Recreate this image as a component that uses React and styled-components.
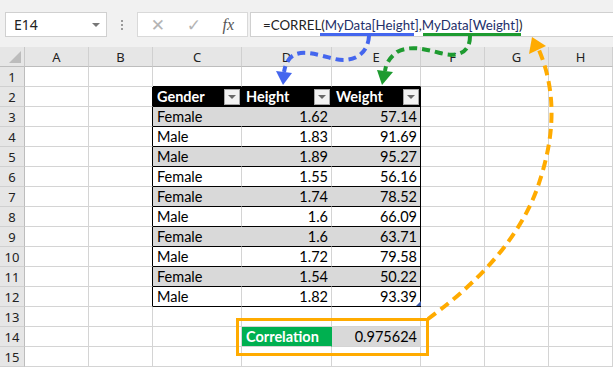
import React from "react";
import styled, { createGlobalStyle } from "styled-components";

const GlobalStyle = createGlobalStyle`
  html, body { margin: 0; padding: 0; background: #ffffff; overflow: hidden; }
  * { box-sizing: border-box; }
`;

const UI_FONT = `"Noto Sans", "Open Sans", "DejaVu Sans", sans-serif`;
const CELL_FONT = `Lato, "Liberation Sans", sans-serif`;

const Wrapper = styled.div`
  position: relative;
  width: 613px;
  height: 367px;
  overflow: hidden;
  background: #ffffff;
`;

const TopBar = styled.div`
  display: flex;
  align-items: flex-start;
  height: 47px;
  padding: 12px 0 0 5px;
  background: #f1f1f1;
`;

const NameBox = styled.div`
  display: flex;
  align-items: center;
  justify-content: space-between;
  width: 102px;
  height: 25px;
  padding: 0 6px 0 8px;
  background: #ffffff;
  border: 1px solid #d0d0d0;
  font-family: ${UI_FONT};
  font-size: 14px;
  color: #222;
`;

const Caret = styled.span`
  width: 0;
  height: 0;
  border-left: 4px solid transparent;
  border-right: 4px solid transparent;
  border-top: 4px solid #777;
`;

const Grip = styled.div`
  display: flex;
  flex-direction: column;
  gap: 2px;
  width: 30px;
  align-items: center;
  padding-top: 8px;
  span {
    width: 2px;
    height: 2px;
    background: #9a9a9a;
  }
`;

const FnBox = styled.div`
  display: flex;
  align-items: center;
  justify-content: space-around;
  width: 111px;
  height: 25px;
  background: #ffffff;
  border: 1px solid #d9d9d9;
  margin-right: 2px;
  font-family: ${UI_FONT};
  padding: 0 2px;
`;

const FnIcon = styled.span`
  color: ${(p) => p.$color};
  font-size: ${(p) => p.$size || 16}px;
  font-style: ${(p) => (p.$italic ? "italic" : "normal")};
  font-family: ${(p) => (p.$serif ? `"Liberation Serif", serif` : UI_FONT)};
  line-height: 1;
`;

const FormulaBox = styled.div`
  flex: 1;
  height: 25px;
  display: flex;
  align-items: center;
  padding-left: 12px;
  background: #ffffff;
  border: 1px solid #d0d0d0;
  border-right: none;
  font-family: ${CELL_FONT};
  font-size: 13.3px;
  color: #222;
  white-space: nowrap;
`;

const Ref = styled.span`
  color: ${(p) => p.$color};
`;

const Sheet = styled.div`
  display: grid;
  grid-template-columns: 25px 64px 64px 89px 90px 89px 64px 64px 64px;
  grid-auto-rows: 20px;
`;

const Corner = styled.div`
  background: #e6e6e6;
  border-right: 1px solid #c8c8c8;
  border-bottom: 1px solid #bdbdbd;
  display: flex;
  align-items: flex-end;
  justify-content: flex-end;
  padding: 0 3px 3px 0;
`;

const CornerTri = styled.span`
  width: 0;
  height: 0;
  border-left: 12px solid transparent;
  border-bottom: 12px solid #bcbcbc;
`;

const ColHead = styled.div`
  background: #e6e6e6;
  border-right: 1px solid #d0d0d0;
  border-bottom: 1px solid #bdbdbd;
  display: flex;
  align-items: center;
  justify-content: center;
  font-family: ${UI_FONT};
  font-size: 13px;
  color: #222;
`;

const RowHead = styled.div`
  background: #e6e6e6;
  border-right: 1px solid #bdbdbd;
  border-bottom: 1px solid #d0d0d0;
  display: flex;
  align-items: center;
  justify-content: center;
  font-family: ${UI_FONT};
  font-size: 13px;
  color: #222;
`;

const Cell = styled.div`
  position: relative;
  background: ${(p) => p.$fill || "#ffffff"};
  border-right: 1px solid ${(p) => p.$rb || "#d4d4d4"};
  border-bottom: 1px solid ${(p) => p.$bb || "#d4d4d4"};
  display: flex;
  align-items: center;
  justify-content: ${(p) => (p.$align === "right" ? "flex-end" : p.$align === "between" ? "space-between" : "flex-start")};
  padding: 0 ${(p) => (p.$align === "between" ? "1px" : "3px")} 0 4px;
  font-family: ${CELL_FONT};
  font-size: 14.5px;
  font-weight: ${(p) => (p.$bold ? 700 : 400)};
  color: ${(p) => p.$color || "#000"};
  white-space: nowrap;
  overflow: visible;
`;

const FilterBtn = styled.span`
  width: 16px;
  height: 16px;
  background: #f3f3f3;
  border: 1px solid #a6a6a6;
  display: flex;
  align-items: center;
  justify-content: center;
  &::after {
    content: "";
    width: 0;
    height: 0;
    border-left: 4px solid transparent;
    border-right: 4px solid transparent;
    border-top: 4px solid #6a6a6a;
  }
`;

const ResizeHandle = styled.span`
  position: absolute;
  right: -1px;
  bottom: 0;
  width: 0;
  height: 0;
  border-left: 5px solid transparent;
  border-bottom: 5px solid #3b5aa8;
`;

const Overlay = styled.svg`
  position: absolute;
  left: 0;
  top: 0;
  pointer-events: none;
`;

const COLS = ["A", "B", "C", "D", "E", "F", "G", "H"];

const DATA = [
  ["Female", "1.62", "57.14"],
  ["Male", "1.83", "91.69"],
  ["Male", "1.89", "95.27"],
  ["Female", "1.55", "56.16"],
  ["Female", "1.74", "78.52"],
  ["Male", "1.6", "66.09"],
  ["Female", "1.6", "63.71"],
  ["Male", "1.72", "79.58"],
  ["Female", "1.54", "50.22"],
  ["Male", "1.82", "93.39"],
];

const GRAY = "#d9d9d9";
const GREEN = "#00b050";
const BLACK = "#000";

function renderRow(r) {
  const cells = [];
  for (let c = 0; c < 8; c++) {
    const key = `${r}-${c}`;
    const inTable = r >= 2 && r <= 12;
    if (inTable && c >= 2 && c <= 4) {
      if (r === 2) {
        const label = ["Gender", "Height", "Weight"][c - 2];
        cells.push(
          <Cell key={key} $fill={BLACK} $rb={BLACK} $bb={BLACK} $bold $color="#fff" $align="between">
            {label}
            <FilterBtn />
          </Cell>
        );
      } else {
        const d = DATA[r - 3];
        const shaded = r % 2 === 1;
        const fill = shaded ? GRAY : "#ffffff";
        const rb = c === 4 ? BLACK : shaded ? GRAY : "#d4d4d4";
        cells.push(
          <Cell key={key} $fill={fill} $rb={rb} $bb={BLACK} $align={c === 2 ? "left" : "right"}>
            {d[c - 2]}
            {r === 12 && c === 4 && <ResizeHandle />}
          </Cell>
        );
      }
      continue;
    }
    if (r === 1 && c >= 2 && c <= 4) {
      cells.push(<Cell key={key} $bb={BLACK} />);
      continue;
    }
    if (inTable && c === 1) {
      cells.push(<Cell key={key} $rb={BLACK} />);
      continue;
    }
    if (r === 14 && c === 3) {
      cells.push(
        <Cell key={key} $fill={GREEN} $rb={GREEN} $bold $color="#fff">
          Correlation
        </Cell>
      );
      continue;
    }
    if (r === 14 && c === 4) {
      cells.push(
        <Cell key={key} $fill={GRAY} $rb={GRAY} $align="right">
          0.975624
        </Cell>
      );
      continue;
    }
    cells.push(<Cell key={key} />);
  }
  return cells;
}

export default function App() {
  const rows = [];
  for (let r = 1; r <= 15; r++) {
    rows.push(<RowHead key={`rh-${r}`}>{r}</RowHead>);
    rows.push(...renderRow(r));
  }

  return (
    <Wrapper>
      <GlobalStyle />
      <TopBar>
        <NameBox>
          E14
          <Caret />
        </NameBox>
        <Grip>
          <span />
          <span />
          <span />
        </Grip>
        <FnBox>
          <FnIcon $color="#b4b4b4" $size={17}>✕</FnIcon>
          <FnIcon $color="#b4b4b4" $size={17}>✓</FnIcon>
          <FnIcon $color="#555" $size={16} $italic $serif>
            fx
          </FnIcon>
        </FnBox>
        <FormulaBox>
          =CORREL(<Ref $color="#24306a">MyData[Height]</Ref>,<Ref $color="#24306a">MyData[Weight]</Ref>)
        </FormulaBox>
      </TopBar>

      <Sheet>
        <Corner>
          <CornerTri />
        </Corner>
        {COLS.map((c) => (
          <ColHead key={c}>{c}</ColHead>
        ))}
        {rows}
      </Sheet>

      <Overlay width="613" height="367" viewBox="0 0 613 367">
        <rect x="320" y="33" width="94" height="3" fill="#4466ee" />
        <rect x="423" y="33" width="98" height="3" fill="#1e9b30" />

        <path
          d="M369 36 C 368 55 352 63 335 59 C 318 55 300 48 290 58 C 286 63 285 67 284 72"
          fill="none"
          stroke="#4466ee"
          strokeWidth="4"
          strokeDasharray="8 5"
        />
        <polygon points="276,71 292,73 283,85" fill="#4466ee" />

        <path
          d="M470 36 C 470 55 455 57 440 53 C 425 49 410 45 397 52 C 389 58 386 64 385 71"
          fill="none"
          stroke="#1e9b30"
          strokeWidth="4"
          strokeDasharray="8 5"
        />
        <polygon points="377,70 393,72 382,85" fill="#1e9b30" />

        <rect x="237.5" y="319.5" width="190" height="35" fill="none" stroke="#ffab00" strokeWidth="3" />

        <path
          d="M428 319 C 465 292 520 245 540 180 C 553 140 558 95 539 50"
          fill="none"
          stroke="#ffab00"
          strokeWidth="4"
          strokeDasharray="10 6"
        />
        <polygon points="532,37 529,54 546,46" fill="#ffab00" />
      </Overlay>
    </Wrapper>
  );
}
